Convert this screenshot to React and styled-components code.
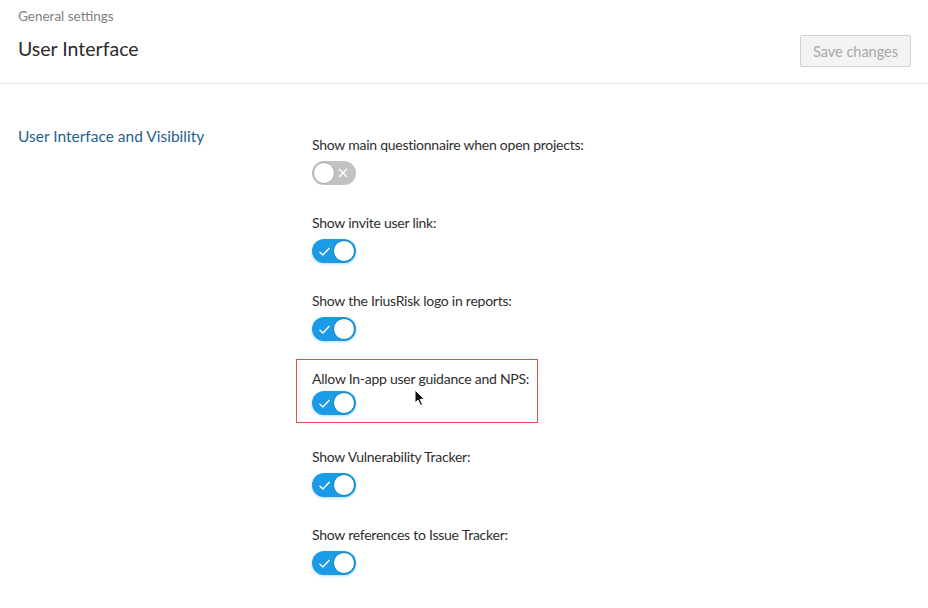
import React from 'react';
import styled, { createGlobalStyle } from 'styled-components';

const GlobalStyle = createGlobalStyle`
    body {
        margin:0;
        background:#fff;
        font-family:'Lato', 'Liberation Sans', sans-serif;
    }
`

const settings = [
    { label: 'Show main questionnaire when open projects:', on: false },
    { label: 'Show invite user link:', on: true },
    { label: 'Show the IriusRisk logo in reports:', on: true },
    { label: 'Allow In-app user guidance and NPS:', on: true, highlighted: true },
    { label: 'Show Vulnerability Tracker:', on: true },
    { label: 'Show references to Issue Tracker:', on: true },
];

const Toggle = ({ on }) => (
    <Switch on={on ? 1 : 0}>
        {on ? (
            <svg width="13" height="11" viewBox="0 0 13 11">
                <path d="M1.5 5.8 L4.9 9 L11.5 2" fill="none" stroke="#fff" strokeWidth="1.4" />
            </svg>
        ) : (
            <svg width="10" height="10" viewBox="0 0 10 10">
                <path d="M1 1 L9 9 M9 1 L1 9" fill="none" stroke="#fff" strokeWidth="1.4" />
            </svg>
        )}
        <Knob on={on ? 1 : 0} />
    </Switch>
);

const App = () => {
    return (
        <Page>
            <GlobalStyle />
            <Header>
                <div>
                    <Breadcrumb>General settings</Breadcrumb>
                    <Title>User Interface</Title>
                </div>
                <SaveButton disabled>Save changes</SaveButton>
            </Header>
            <Section>
                <SectionTitle>User Interface and Visibility</SectionTitle>
                <List>
                    {settings.map((s) => (
                        <Item key={s.label} highlighted={s.highlighted ? 1 : 0}>
                            <Label>{s.label}</Label>
                            <Toggle on={s.on} />
                            {s.highlighted && (
                                <Cursor width="12" height="18" viewBox="0 0 12 18">
                                    <path d="M1 1 L1 14 L4 11 L6.5 16.5 L8.5 15.6 L6.2 10.3 L10.5 10.3 Z" fill="#111" stroke="#fff" strokeWidth="1" />
                                </Cursor>
                            )}
                        </Item>
                    ))}
                </List>
            </Section>
        </Page>
    )
}

export default App;

const Page = styled.div`
    width:928px;
    height:608px;
    overflow:hidden;
    color:#333;
`

const Header = styled.div`
    display:flex;
    justify-content:space-between;
    align-items:flex-start;
    height:83px;
    padding:0 17px 0 18px;
    border-bottom:1px solid #ececec;
`

const Breadcrumb = styled.div`
    margin-top:7px;
    font-size:13.5px;
    line-height:18px;
    color:#808080;
`

const Title = styled.h1`
    margin:10px 0 0;
    font-size:19.5px;
    line-height:28px;
    font-weight:400;
    color:#2b2b2b;
`

const SaveButton = styled.button`
    margin-top:35px;
    width:111px;
    height:32px;
    background:#f3f3f3;
    border:1px solid #cfcfcf;
    border-radius:2px;
    font-family:inherit;
    font-size:14.5px;
    color:#a8a8a8;
`

const Section = styled.div`
    display:grid;
    grid-template-columns:294px 1fr;
    padding:42px 0 0 18px;
`

const SectionTitle = styled.h2`
    margin:0;
    font-size:15.5px;
    line-height:20px;
    font-weight:400;
    color:#1f5f8e;
`

const List = styled.div`
    display:flex;
    flex-direction:column;
    gap:28px;
    padding-top:9px;
`

const Item = styled.div`
    position:relative;
    display:flex;
    flex-direction:column;
    align-items:flex-start;
    gap:${(p) => (p.highlighted ? '2px' : '6px')};
    ${(p) => p.highlighted && `
        box-sizing:border-box;
        width:242px;
        margin:-10px 0 -4px -16px;
        padding:9px 15px 7px;
        border:1.5px solid #ec4c4c;
    `}
`

const Label = styled.div`
    font-size:14px;
    line-height:20px;
    letter-spacing:-0.25px;
    white-space:nowrap;
    color:#2e2e2e;
`

const Switch = styled.div`
    position:relative;
    box-sizing:border-box;
    width:44px;
    height:24px;
    border-radius:12px;
    background:${(p) => (p.on ? '#1b9ae6' : '#c2c2c2')};
    display:flex;
    align-items:center;
    justify-content:${(p) => (p.on ? 'flex-start' : 'flex-end')};
    padding-left:${(p) => (p.on ? '6px' : '0')};
    padding-right:${(p) => (p.on ? '0' : '8px')};
    box-shadow:${(p) => (p.on ? '0 1px 3px rgba(27,154,230,0.35)' : 'none')};
`

const Knob = styled.span`
    position:absolute;
    top:1px;
    left:${(p) => (p.on ? '21px' : '1px')};
    box-sizing:border-box;
    width:22px;
    height:22px;
    border-radius:50%;
    background:#fff;
    border:1px solid ${(p) => (p.on ? '#1580c4' : '#a8a8a8')};
`

const Cursor = styled.svg`
    position:absolute;
    left:117px;
    top:29px;
`
